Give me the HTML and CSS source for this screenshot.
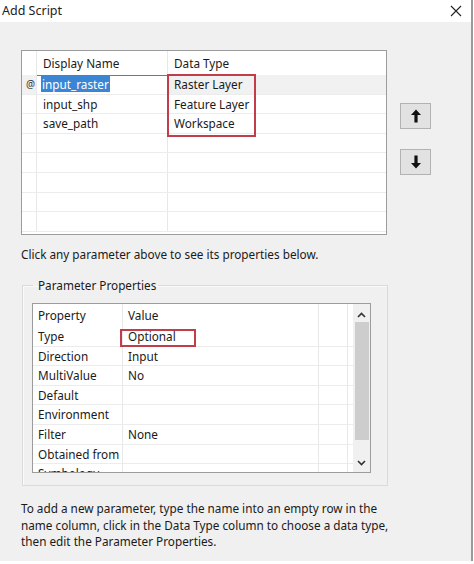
FILE: index.html
```html
<!DOCTYPE html>
<html>
<head>
<meta charset="utf-8">
<link rel="stylesheet" href="styles.css">
</head>
<body>
<div class="window">
  <div class="titlebar">
    <span class="title">Add Script</span>
    <svg class="close" width="12" height="12" viewBox="0 0 12 12"><path d="M1 1 L11 11 M11 1 L1 11" stroke="#222" stroke-width="1.1" fill="none"/></svg>
  </div>
  <div class="content">
    <div class="top">
      <div class="grid params">
        <div class="row head">
          <div class="c0"></div>
          <div class="c1">Display Name</div>
          <div class="c2">Data Type</div>
        </div>
        <div class="row sel">
          <div class="c0 mark">@</div>
          <div class="c1 edit"><span class="hl">input_raster</span></div>
          <div class="c2">Raster Layer</div>
        </div>
        <div class="row">
          <div class="c0"></div>
          <div class="c1">input_shp</div>
          <div class="c2">Feature Layer</div>
        </div>
        <div class="row">
          <div class="c0"></div>
          <div class="c1">save_path</div>
          <div class="c2">Workspace</div>
        </div>
        <div class="row"><div class="c0"></div><div class="c1"></div><div class="c2"></div></div>
        <div class="row"><div class="c0"></div><div class="c1"></div><div class="c2"></div></div>
        <div class="row"><div class="c0"></div><div class="c1"></div><div class="c2"></div></div>
        <div class="row"><div class="c0"></div><div class="c1"></div><div class="c2"></div></div>
        <div class="row"><div class="c0"></div><div class="c1"></div><div class="c2"></div></div>
        <div class="redbox top-red"></div>
      </div>
      <div class="buttons">
        <div class="btn"><svg width="12" height="14" viewBox="0 0 12 14"><path d="M6 0.5 L11 6 L7.6 6 L7.6 13.5 L4.4 13.5 L4.4 6 L1 6 Z" fill="#111"/></svg></div>
        <div class="btn"><svg width="12" height="14" viewBox="0 0 12 14"><path d="M6 13.5 L11 8 L7.6 8 L7.6 0.5 L4.4 0.5 L4.4 8 L1 8 Z" fill="#111"/></svg></div>
      </div>
    </div>
    <p class="hint">Click any parameter above to see its properties below.</p>
    <fieldset class="group">
      <legend>Parameter Properties</legend>
      <div class="props">
        <div class="pgrid">
          <div class="prow phead"><div class="p1">Property</div><div class="p2">Value</div><div class="p3"></div><div class="p4"></div></div>
          <div class="prow"><div class="p1">Type</div><div class="p2">Optional</div><div class="p3"></div><div class="p4"></div></div>
          <div class="prow"><div class="p1">Direction</div><div class="p2">Input</div><div class="p3"></div><div class="p4"></div></div>
          <div class="prow"><div class="p1">MultiValue</div><div class="p2">No</div><div class="p3"></div><div class="p4"></div></div>
          <div class="prow"><div class="p1">Default</div><div class="p2"></div><div class="p3"></div><div class="p4"></div></div>
          <div class="prow"><div class="p1">Environment</div><div class="p2"></div><div class="p3"></div><div class="p4"></div></div>
          <div class="prow"><div class="p1">Filter</div><div class="p2">None</div><div class="p3"></div><div class="p4"></div></div>
          <div class="prow"><div class="p1">Obtained from</div><div class="p2"></div><div class="p3"></div><div class="p4"></div></div>
          <div class="prow"><div class="p1">Symbology</div><div class="p2"></div><div class="p3"></div><div class="p4"></div></div>
          <div class="redbox opt-red"></div>
        </div>
        <div class="scrollbar">
          <svg class="sarrow" width="9" height="6" viewBox="0 0 9 6"><path d="M1 5 L4.5 1.5 L8 5" stroke="#333" stroke-width="1.6" fill="none"/></svg>
          <div class="thumb"></div>
          <svg class="sarrow" width="9" height="6" viewBox="0 0 9 6"><path d="M1 1 L4.5 4.5 L8 1" stroke="#333" stroke-width="1.6" fill="none"/></svg>
        </div>
      </div>
    </fieldset>
    <p class="note">To add a new parameter, type the name into an empty row in the name column, click in the Data Type column to choose a data type, then edit the Parameter Properties.</p>
  </div>
</div>
</body>
</html>
```
FILE: styles.css
```css
* { box-sizing: border-box; }
html, body { margin: 0; padding: 0; background: #fff; }
body {
  font-family: "Noto Sans", "Open Sans", sans-serif;
  font-size: 11.75px;
  color: #1a1a1a;
}
.window {
  width: 473px;
  height: 561px;
  background: #f0f0f0;
  border-right: 2px solid #9a9a9a;
  display: flex;
  flex-direction: column;
}
.titlebar {
  height: 22px;
  background: #fff;
  display: flex;
  align-items: center;
  justify-content: space-between;
  padding: 0 9px 2px 2px;
}
.title { font-size: 12.5px; color: #222; }
.close { margin-top: 1px; }
.content {
  padding: 28px 0 0 21px;
  position: relative;
}
.top { display: flex; align-items: flex-start; }
.grid {
  position: relative;
  width: 366px;
  height: 185px;
  background: #fff;
  border: 1px solid #9c9c9c;
  overflow: hidden;
}
.row {
  display: grid;
  grid-template-columns: 15px 131px 1fr;
  height: 19.6px;
  border-bottom: 1px solid #ececec;
  line-height: 18px;
}
.row.head { height: 24px; line-height: 24px; border-bottom: none; }
.row.sel { background: #f1f1f1; }
.row > div { padding-left: 6px; border-right: 1px solid #e8e8e8; white-space: nowrap; }
.row > .c0 { padding-left: 0; }
.row > .c2 { border-right: none; }
.mark { font-size: 10px; text-align: right; padding-right: 1px; color: #333; }
.c1.edit { padding-left: 4px; background: #fff; box-shadow: inset 0 1px 0 #777; }
.hl { background: #3a86d4; color: #fff; padding: 0 1px; display: inline-block; line-height: 16px; margin-top: 1px; }
.redbox {
  position: absolute;
  border: 2.5px solid #c23d4a;
}
.top-red { left: 145px; top: 23px; width: 89px; height: 63px; }
.buttons {
  display: flex;
  flex-direction: column;
  gap: 20px;
  margin-left: 13px;
  margin-top: 53px;
}
.btn {
  width: 31px;
  height: 26px;
  background: #e2e2e2;
  border: 1px solid #b2b2b2;
  display: flex;
  align-items: center;
  justify-content: center;
}
.hint { margin: 11px 0 0 0; line-height: 16px; }
.group {
  margin: 15px 0 0 1px;
  width: 366px;
  height: 209px;
  border: 1px solid #dadada;
  box-shadow: inset 1px 1px 0 #fafafa;
  padding: 10px 16px 12px 9px;
  min-width: 0;
}
.group legend { padding: 0 2px 0 5px; margin-left: 1px; line-height: 16px; }
.props {
  display: flex;
  width: 339px;
  height: 170px;
  background: #fff;
  border: 1px solid #9c9c9c;
  overflow: hidden;
}
.pgrid { position: relative; flex: 1; }
.prow {
  display: grid;
  grid-template-columns: 90px 196px 29px 1fr;
  height: 19.6px;
  line-height: 19px;
  border-bottom: 1px solid #ececec;
  white-space: nowrap;
}
.prow.phead { height: 23px; line-height: 23px; border-bottom: none; }
.prow > div { padding-left: 5px; border-right: 1px solid #e8e8e8; }
.prow > .p2 { padding-left: 5px; }
.prow > .p4 { border-right: none; }
.opt-red { left: 87px; top: 25px; width: 76px; height: 18px; border-width: 2px; }
.scrollbar {
  width: 17px;
  background: #f0f0f0;
  display: flex;
  flex-direction: column;
  align-items: center;
  padding: 8px 0 6px;
}
.sarrow { flex: none; }
.thumb {
  width: 14px;
  height: 118px;
  background: #cdcdcd;
  margin: 4px 0 auto;
}
.note { margin: 14px 0 0 0; line-height: 16.5px; width: 380px; }
```
